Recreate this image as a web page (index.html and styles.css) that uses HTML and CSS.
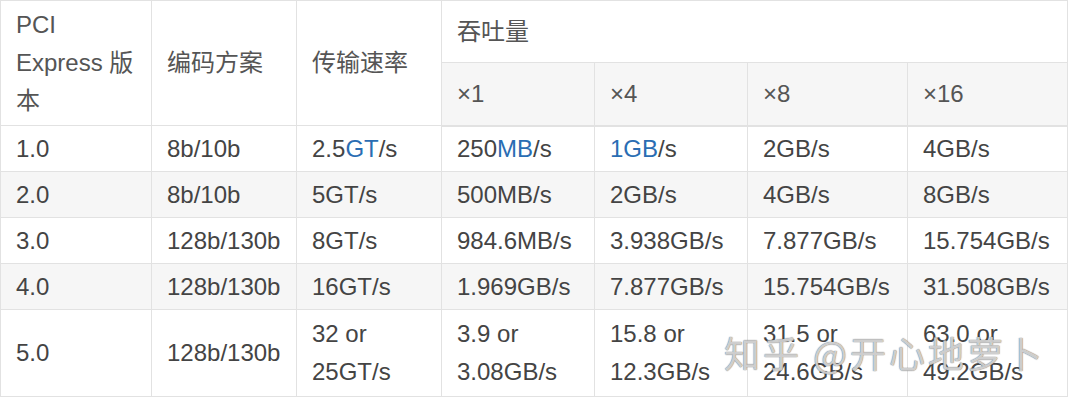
FILE: index.html
```html
<!DOCTYPE html>
<html lang="zh">
<head>
<meta charset="utf-8">
<title>PCI Express</title>
<link rel="stylesheet" href="styles.css">
</head>
<body>
<div class="wrap">
<table class="spec">
  <colgroup>
    <col class="c1"><col class="c2"><col class="c3"><col class="c4"><col class="c5"><col class="c6"><col class="c7">
  </colgroup>
  <thead>
    <tr class="h1">
      <th rowspan="2">PCI Express 版本</th>
      <th rowspan="2">编码方案</th>
      <th rowspan="2">传输速率</th>
      <th colspan="4" class="tp">吞吐量</th>
    </tr>
    <tr class="h2">
      <th>×1</th><th>×4</th><th>×8</th><th>×16</th>
    </tr>
  </thead>
  <tbody>
    <tr>
      <td>1.0</td><td>8b/10b</td><td>2.5<span class="lk">GT</span>/s</td>
      <td>250<span class="lk">MB</span>/s</td><td><span class="lk">1GB</span>/s</td><td>2GB/s</td><td>4GB/s</td>
    </tr>
    <tr class="alt">
      <td>2.0</td><td>8b/10b</td><td>5GT/s</td>
      <td>500MB/s</td><td>2GB/s</td><td>4GB/s</td><td>8GB/s</td>
    </tr>
    <tr>
      <td>3.0</td><td>128b/130b</td><td>8GT/s</td>
      <td>984.6MB/s</td><td>3.938GB/s</td><td>7.877GB/s</td><td>15.754GB/s</td>
    </tr>
    <tr class="alt">
      <td>4.0</td><td>128b/130b</td><td>16GT/s</td>
      <td>1.969GB/s</td><td>7.877GB/s</td><td>15.754GB/s</td><td>31.508GB/s</td>
    </tr>
    <tr class="tall">
      <td>5.0</td><td>128b/130b</td><td>32 or<br>25GT/s</td>
      <td>3.9 or<br>3.08GB/s</td><td>15.8 or<br>12.3GB/s</td><td>31.5 or<br>24.6GB/s</td><td>63.0 or<br>49.2GB/s</td>
    </tr>
  </tbody>
</table>
<div class="mark">知乎 @开心地萝卜</div>
</div>
</body>
</html>
```

FILE: styles.css
```css
html, body {
  margin: 0;
  padding: 0;
  background: #ffffff;
}
.wrap {
  position: relative;
  width: 1067px;
}
.spec {
  border-collapse: collapse;
  table-layout: fixed;
  width: 1067px;
  font-family: "Liberation Sans", "Noto Sans CJK SC", sans-serif;
  font-size: 24px;
  line-height: 38px;
  color: #444444;
}
.c1 { width: 151px; }
.c2 { width: 145px; }
.c3 { width: 145px; }
.c4 { width: 153px; }
.c5 { width: 153px; }
.c6 { width: 160px; }
.c7 { width: 160px; }
.spec th, .spec td {
  border: 1px solid #e2e2e2;
  padding: 3px 6px 3px 15px;
  text-align: left;
  vertical-align: middle;
  font-weight: normal;
}
.spec th {
  color: #555555;
}
.h1 { height: 62px; }
.h2 { height: 63px; }
.h2 th {
  background: #f6f6f6;
  border-bottom: 2px solid #e2e2e2;
}
.spec tbody tr { height: 46px; }
.spec tbody tr.tall { height: 87px; }
.spec tbody tr.alt td { background: #f6f6f6; }
.lk { color: #2a6db3; }
.mark {
  position: absolute;
  left: 724px;
  top: 328px;
  font-family: "Noto Sans CJK SC", sans-serif;
  font-size: 36px;
  line-height: 48px;
  color: rgba(255, 255, 255, 0.7);
  text-shadow: 0 0 1px rgba(80, 80, 80, 0.7), 0 0 1px rgba(80, 80, 80, 0.7);
  letter-spacing: 3px;
  white-space: nowrap;
  pointer-events: none;
}
```
